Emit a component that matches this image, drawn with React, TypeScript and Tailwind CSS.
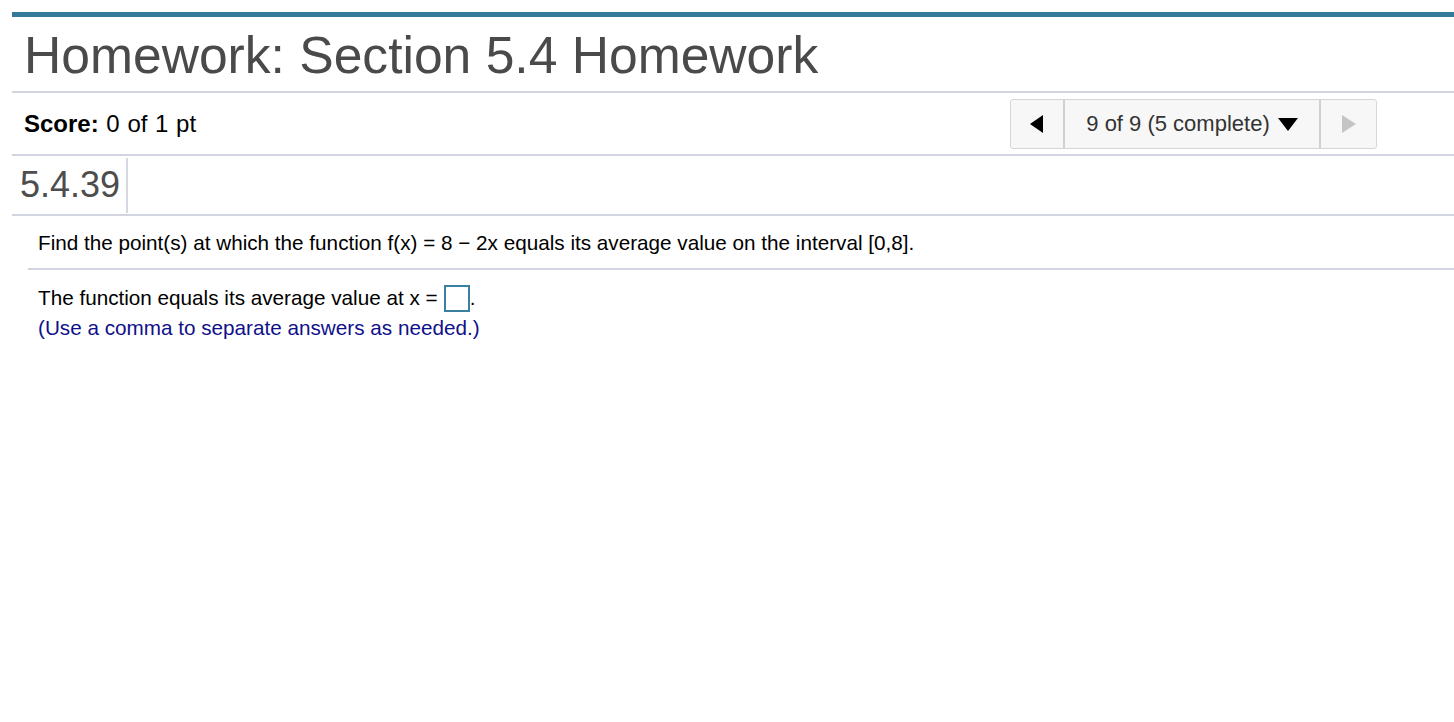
export default function App() {
	return (
		<div className="min-h-[722px] bg-white pt-3 pl-3 font-['Liberation_Sans',Arial,sans-serif]">
			<div className="h-[5px] bg-[#35799a]" />
			<h1 className="pl-3 pt-[8px] pb-[6px] text-[51.6px] leading-[60px] text-[#4a4a4a]">Homework: Section 5.4 Homework</h1>
			<div className="border-t-2 border-[#d2d5df] flex items-center justify-between h-[63px] pl-3">
				<p className="text-[24px] text-black [word-spacing:1px]"><span className="font-bold">Score:</span> 0 of 1 pt</p>
				<div className="mr-[77px] flex h-[50px] rounded-[3px] border border-[#d6d6d6] bg-[#f7f7f7]">
					<button className="flex w-[54px] items-center justify-center border-r-2 border-[#d0d0d0]">
						<svg width="14" height="18" viewBox="0 0 14 18"><path d="M13 0 L0 9 L13 18 Z" fill="#000" /></svg>
					</button>
					<button className="flex w-[256px] items-center justify-center gap-2 border-r-2 border-[#d0d0d0] text-[22px] text-[#333]">
						<span>9 of 9 (5 complete)</span>
						<svg width="20" height="14" viewBox="0 0 20 14"><path d="M0 1 L20 1 L10 14 Z" fill="#000" /></svg>
					</button>
					<button className="flex w-[55px] items-center justify-center">
						<svg width="14" height="18" viewBox="0 0 14 18"><path d="M0 0 L14 9 L0 18 Z" fill="#c4c4c4" /></svg>
					</button>
				</div>
			</div>
			<div className="border-t-2 border-[#d2d5df] flex h-[60px] items-center">
				<div className="flex h-[55px] items-center border-r-2 border-[#d5d8e0] pl-2 pr-[6px] text-[36px] text-[#4d4d4d]">5.4.39</div>
			</div>
			<div className="border-t-2 border-[#d2d5df] pl-[16px]">
				<p className="pl-[10px] pt-[16px] pb-[14px] text-[20.7px] leading-[22px] text-black">Find the point(s) at which the function f(x) = 8 − 2x equals its average value on the interval [0,8].</p>
				<div className="border-t-2 border-[#d2d5df]" />
				<div className="pl-[10px] pt-[13px] text-[20.7px] leading-[30px] text-black">
					<p className="flex items-center">
						The function equals its average value at x =
						<span className="ml-[6px] inline-block h-[27px] w-[26px] border-2 border-[#3b7fa3]" />
						<span>.</span>
					</p>
					<p className="text-[#10108a]">(Use a comma to separate answers as needed.)</p>
				</div>
			</div>
		</div>
	);
}
